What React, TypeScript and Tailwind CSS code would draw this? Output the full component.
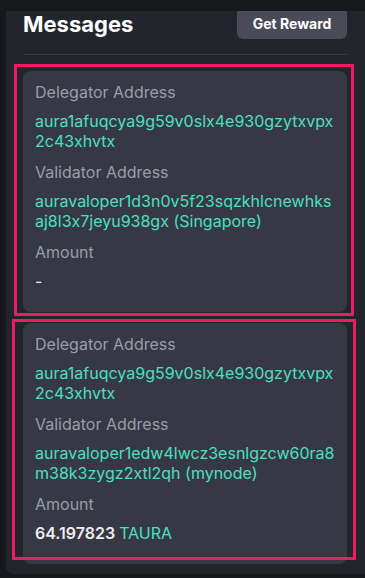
// Delegation messages panel: header with reward button, then one card per delegate message.

const messages = [
    {
        delegator: ["aura1afuqcya9g59v0slx4e930gzytxvpx", "2c43xhvtx"],
        validator: ["auravaloper1d3n0v5f23sqzkhlcnewhks", "aj8l3x7jeyu938gx (Singapore)"],
        amount: null as string | null,
        outline: "-left-[9px] -right-[7px] -top-[7px] -bottom-[4px]",
    },
    {
        delegator: ["aura1afuqcya9g59v0slx4e930gzytxvpx", "2c43xhvtx"],
        validator: ["auravaloper1edw4lwcz3esnlgzcw60ra8", "m38k3zygz2xtl2qh (mynode)"],
        amount: "64.197823",
        outline: "-left-[11px] -right-[9px] -top-[4px] bottom-[4px]",
    },
]

function Field(props: { label: string, children: React.ReactNode }) {
    return (
        <div className="mb-[10px]">
            <p className="text-[16px] leading-[22px] text-[#9a9da8]">{props.label}</p>
            <div className="mt-2 text-[16px] leading-[20px]">{props.children}</div>
        </div>
    )
}

function Lines(props: { lines: string[] }) {
    return (
        <p className="text-[#4ae0bf] break-all">
            {props.lines.map((l, i) => (
                <span key={i} className="block whitespace-nowrap">{l}</span>
            ))}
        </p>
    )
}

export default function App() {
    return (
        <div className="h-[578px] overflow-hidden bg-[#17181c] pt-[11px] pl-[6px] [font-feature-settings:'calt'_0]"
             style={{ fontFamily: "Inter, 'Noto Sans', sans-serif" }}>
            <div className="relative h-[563px] overflow-hidden rounded-bl-lg bg-[#23252c] pl-[17px] pr-[18px]">
                <div className="flex items-start justify-between h-[44px] border-b border-[#383a43]">
                    <h2 className="text-[22px] leading-[26px] font-bold text-white">Messages</h2>
                    <button className="-mt-[4px] h-[32px] w-[110px] rounded-md bg-[#4a4b57] text-[14px] font-bold text-white">
                        Get Reward
                    </button>
                </div>

                <div className="mt-4 flex flex-col gap-[11px]">
                    {messages.map((m, i) => (
                        <div key={i} className="relative rounded-lg bg-[#363843] px-3 pt-[10px] pb-[11px]">
                            <Field label="Delegator Address">
                                <Lines lines={m.delegator} />
                            </Field>
                            <Field label="Validator Address">
                                <Lines lines={m.validator} />
                            </Field>
                            <Field label="Amount">
                                {m.amount ? (
                                    <p className="text-[#ececf1] font-semibold">
                                        {m.amount} <span className="text-[#4ae0bf] font-normal">TAURA</span>
                                    </p>
                                ) : (
                                    <p className="text-[#ececf1]">-</p>
                                )}
                            </Field>
                            {/* highlight outline drawn over the card */}
                            <div className={"pointer-events-none absolute border-[3px] border-[#ee1c63] " + m.outline} />
                        </div>
                    ))}
                </div>
            </div>
        </div>
    )
}
